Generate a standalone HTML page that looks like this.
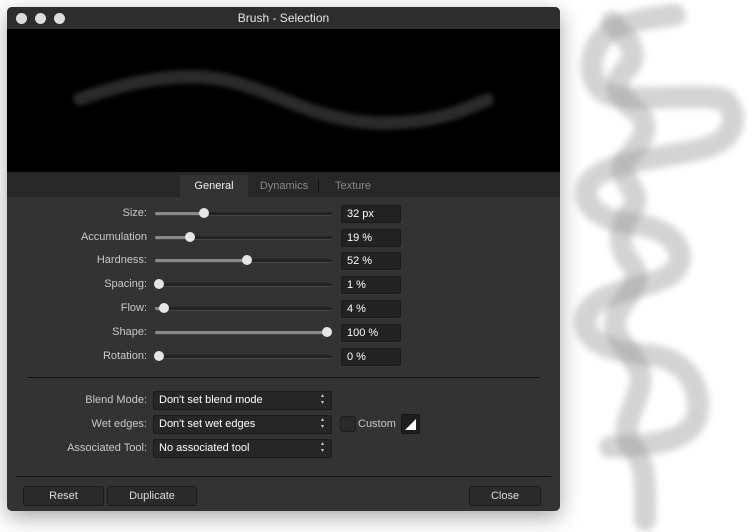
<!DOCTYPE html><html><head><style>
body{margin:0;width:754px;height:532px;background:#fff;position:relative;overflow:hidden;font-family:"Liberation Sans",sans-serif;font-size:11px;color:#d8d8d8}
.a{position:absolute}
.win{left:7px;top:7px;width:553px;height:504px;background:#333;border-radius:5px;box-shadow:0 6px 22px rgba(0,0,0,.35);overflow:hidden}
.lbl{text-align:right;width:120px;left:27px;color:#c8c8c8}
.track{left:155px;width:177px;height:3px;background:#222;border-radius:2px;box-shadow:0 1px 0 #444}
.fill{height:3px;background:#8a8a8a;border-radius:2px}
.th{width:10px;height:10px;border-radius:50%;background:#e6e6e6;margin-left:-5px}
.box{left:341px;background:#222;border:1px solid #1a1a1a;border-radius:2px;color:#fff;padding-left:5px;box-sizing:border-box;width:60px;height:18px;line-height:17px}
.dd{left:153px;width:179px;height:19px;background:#262626;border:1px solid #1b1b1b;border-radius:2px;box-sizing:border-box;color:#fff;padding-left:5px;line-height:17px}
.dd::after{content:"▴\A▾";white-space:pre;position:absolute;right:7px;top:1px;font-size:6px;line-height:7px;color:#ccc}
.btn{top:486px;height:20px;background:#2a2a2a;border:1px solid #1a1a1a;border-radius:3px;box-sizing:border-box;text-align:center;line-height:18px;color:#ddd}
</style></head><body>
<svg class="a" style="left:0;top:0" width="754" height="532"><defs><filter id="b"><feGaussianBlur stdDeviation="3.5"/></filter></defs>
<g fill="none" stroke="rgba(150,150,150,0.42)" stroke-width="22" stroke-linecap="round" filter="url(#b)">
<path d="M675,15 C645,18 615,24 605,35 C588,52 585,85 610,95 C640,103 700,92 725,100 C740,115 735,140 705,148 C670,158 600,160 588,185 C580,205 600,222 640,225 C680,232 690,260 670,275 C640,292 590,290 585,320 C585,345 615,352 650,355 C690,360 700,390 698,410 C695,440 660,445 610,447"/>
<path d="M612,22 C620,35 640,45 630,65 C615,80 610,90 635,110 C655,125 640,145 625,160 C615,178 640,188 635,205 C625,220 612,240 630,262 C650,285 615,300 615,325 C615,345 645,360 640,385 C635,410 620,425 630,445 C648,462 645,490 645,520"/>
</g></svg>
<div class="a win">
<div class="a" style="left:0;top:0;width:553px;height:22px;background:#2d2d2d"></div>
<div class="a" style="left:9px;top:6px;width:11px;height:11px;border-radius:50%;background:#ddd"></div>
<div class="a" style="left:28px;top:6px;width:11px;height:11px;border-radius:50%;background:#ddd"></div>
<div class="a" style="left:47px;top:6px;width:11px;height:11px;border-radius:50%;background:#ddd"></div>
<div class="a" style="left:0;top:4px;width:553px;text-align:center;font-size:12px;color:#e6e6e6">Brush - Selection</div>
<div class="a" style="left:0;top:22px;width:553px;height:143px;background:#000"></div>
<svg class="a" style="left:0;top:22px" width="553" height="143"><path d="M73,70 C110,57 150,46 195,48 C260,52 300,95 380,94 C430,93 455,82 480,71" fill="none" stroke="#2b2b2b" stroke-width="13" stroke-linecap="round" style="filter:blur(2.5px)"/></svg>
<div class="a" style="left:0;top:165px;width:553px;height:25px;background:#272727"></div>
<div class="a" style="left:173px;top:168px;width:68px;height:22px;background:#333"></div>
<div class="a" style="left:173px;top:173px;width:68px;text-align:center;color:#eee">General</div>
<div class="a" style="left:244px;top:173px;width:66px;text-align:center;color:#888">Dynamics</div>
<div class="a" style="left:311px;top:172px;width:1px;height:13px;background:#111"></div>
<div class="a" style="left:313px;top:173px;width:66px;text-align:center;color:#888">Texture</div>
</div>
<div class="a lbl" style="top:207px">Size:</div><div class="a track" style="top:212px"><div class="fill" style="width:49px"></div></div><div class="a th" style="left:204px;top:208px"></div><div class="a box" style="top:205px">32 px</div>
<div class="a lbl" style="top:231px">Accumulation</div><div class="a track" style="top:236px"><div class="fill" style="width:35px"></div></div><div class="a th" style="left:190px;top:232px"></div><div class="a box" style="top:229px">19 %</div>
<div class="a lbl" style="top:254px">Hardness:</div><div class="a track" style="top:259px"><div class="fill" style="width:92px"></div></div><div class="a th" style="left:247px;top:255px"></div><div class="a box" style="top:252px">52 %</div>
<div class="a lbl" style="top:278px">Spacing:</div><div class="a track" style="top:283px"></div><div class="a th" style="left:159px;top:279px"></div><div class="a box" style="top:276px">1 %</div>
<div class="a lbl" style="top:302px">Flow:</div><div class="a track" style="top:307px"><div class="fill" style="width:9px"></div></div><div class="a th" style="left:164px;top:303px"></div><div class="a box" style="top:300px">4 %</div>
<div class="a lbl" style="top:326px">Shape:</div><div class="a track" style="top:331px"><div class="fill" style="width:172px"></div></div><div class="a th" style="left:327px;top:327px"></div><div class="a box" style="top:324px">100 %</div>
<div class="a lbl" style="top:350px">Rotation:</div><div class="a track" style="top:355px"></div><div class="a th" style="left:159px;top:351px"></div><div class="a box" style="top:348px">0 %</div>
<div class="a" style="left:27px;top:377px;width:513px;height:1px;background:#151515"></div>
<div class="a lbl" style="top:394px">Blend Mode:</div><div class="a dd" style="top:391px">Don't set blend mode</div>
<div class="a lbl" style="top:418px">Wet edges:</div><div class="a dd" style="top:415px">Don't set wet edges</div>
<div class="a lbl" style="top:442px">Associated Tool:</div><div class="a dd" style="top:439px">No associated tool</div>
<div class="a" style="left:340px;top:416px;width:14px;height:14px;background:#2a2a2a;border:1px solid #1c1c1c;border-radius:3px"></div>
<div class="a" style="left:358px;top:418px;color:#c8c8c8">Custom</div>
<div class="a" style="left:401px;top:414px;width:17px;height:18px;background:#1e1e1e;border:1px solid #151515;border-radius:2px"><svg width="17" height="18"><path d="M3,15 L14,4 L14,15Z" fill="#fff"/></svg></div>
<div class="a" style="left:16px;top:476px;width:535px;height:1px;background:#151515"></div>
<div class="a btn" style="left:23px;width:81px">Reset</div>
<div class="a btn" style="left:107px;width:90px">Duplicate</div>
<div class="a btn" style="left:469px;width:72px">Close</div>
</body></html>
